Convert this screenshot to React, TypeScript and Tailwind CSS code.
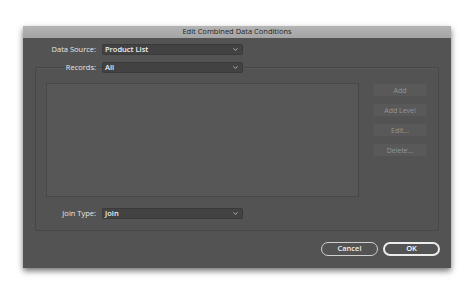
import { ChevronDown } from 'lucide-react';

const font = { fontFamily: '"Open Sans", "Liberation Sans", sans-serif' };

function Select({ value }: { value: string }) {
    return (
        <div className="relative z-10 flex h-[11px] w-[141px] items-center justify-between rounded-[2px] border border-[#3a3a3a] bg-[#424242] pl-[2px] pr-[3px]">
            <span className="text-[7.5px] leading-none font-semibold text-[#f0f0f0]">{value}</span>
            <ChevronDown className="h-[7px] w-[7px] text-[#bdbdbd]" strokeWidth={3} />
        </div>
    );
}

function SideButton({ label }: { label: string }) {
    return (
        <div className="flex h-[12px] w-[54px] items-center justify-center rounded-[2px] bg-[#595959] text-[7px] leading-none text-[#969696]">
            {label}
        </div>
    );
}

export default function App() {
    return (
        <div className="h-[294px] w-[474px] bg-white pl-[23px] pt-[26px]" style={font}>
            <div className="flex h-[242px] w-[428px] flex-col bg-[#535353] shadow-[0_3px_6px_rgba(0,0,0,0.55)]">

                {/* Title bar */}
                <div className="flex h-[12px] items-center justify-center bg-gradient-to-b from-[#b4b4b4] to-[#a5a5a5] text-[7.5px] leading-none font-medium text-[#1e1e1e]">
                    Edit Combined Data Conditions
                </div>

                {/* Data Source */}
                <div className="mt-[6px] flex items-center">
                    <span className="w-[73px] text-right text-[7.5px] leading-none font-medium text-[#e6e6e6]">Data Source:</span>
                    <div className="ml-[6px]">
                        <Select value="Product List" />
                    </div>
                </div>

                {/* Records */}
                <div className="relative z-10 mt-[7px] flex items-center">
                    <span className="w-[73px] text-right text-[7.5px] leading-none font-medium text-[#e6e6e6]">
                        <span className="bg-[#535353] pl-[2px]">Records:</span>
                    </span>
                    <div className="ml-[6px]">
                        <Select value="All" />
                    </div>
                </div>

                {/* Group box */}
                <div className="mx-[12px] mt-[-6px] flex h-[164px] flex-col rounded-[2px] border border-[#474747] shadow-[inset_0_1px_0_rgba(255,255,255,0.04)]">
                    <div className="flex pl-[10px] pt-[15px]">
                        <div className="h-[114px] w-[313px] border border-[#474747] bg-[#575757]" />
                        <div className="ml-[14px] flex flex-col gap-[8px] pt-[1px]">
                            <SideButton label="Add" />
                            <SideButton label="Add Level" />
                            <SideButton label="Edit..." />
                            <SideButton label="Delete..." />
                        </div>
                    </div>

                    <div className="mt-[11px] flex items-center">
                        <span className="w-[60px] text-right text-[7.5px] leading-none font-medium text-[#e6e6e6]">Join Type:</span>
                        <div className="ml-[6px]">
                            <Select value="Join" />
                        </div>
                    </div>
                </div>

                {/* Footer */}
                <div className="mt-[11px] flex justify-end gap-[5px] pr-[11px]">
                    <div className="flex h-[14px] w-[57px] items-center justify-center rounded-full border border-[#cfcfcf] text-[7.5px] leading-none font-semibold text-[#ececec]">
                        Cancel
                    </div>
                    <div className="flex h-[14px] w-[57px] items-center justify-center rounded-full border-2 border-[#ececec] text-[7.5px] leading-none font-semibold text-white">
                        OK
                    </div>
                </div>
            </div>
        </div>
    );
}
